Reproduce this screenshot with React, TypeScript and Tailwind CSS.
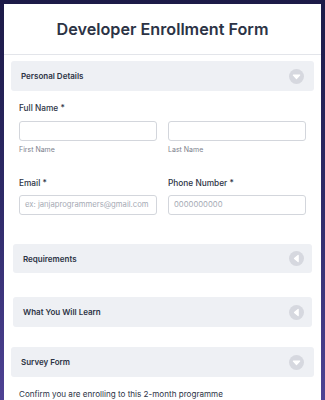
import React from "react";

function CircleIcon({ dir }: { dir: "down" | "left" }) {
  return (
    <svg width="15" height="15" viewBox="0 0 16 16" className="shrink-0">
      <circle cx="8" cy="8" r="8" fill="#d6d8df" />
      {dir === "down" ? (
        <path d="M4.6 6.4 L8 10.2 L11.4 6.4 Z" fill="#ffffff" stroke="#ffffff" strokeWidth="1.2" strokeLinejoin="round" />
      ) : (
        <path d="M9.8 4.6 L5.8 8 L9.8 11.4 Z" fill="#ffffff" stroke="#ffffff" strokeWidth="1.2" strokeLinejoin="round" />
      )}
    </svg>
  );
}

function SectionBar({ title, open, tall }: { title: string; open: boolean; tall?: boolean }) {
  return (
    <div
      className={
        open
          ? "flex h-[30px] items-center justify-between rounded-[3px] bg-[#eef0f4] pl-[10px] pr-[10px]"
          : tall
            ? "mx-[2px] flex h-[30px] items-center justify-between rounded-[3px] bg-[#eef0f4] pl-[10px] pr-[8px]"
            : "mx-[2px] flex h-[29px] items-center justify-between rounded-[3px] bg-[#eef0f4] pl-[10px] pr-[8px]"
      }
    >
      <span className="text-[8px] font-semibold leading-[12px] text-[#2c3345]">{title}</span>
      <CircleIcon dir={open ? "down" : "left"} />
    </div>
  );
}

function Field({ placeholder }: { placeholder?: string }) {
  return (
    <div className="flex h-[20px] items-center overflow-hidden whitespace-nowrap rounded-[3px] border border-[#d3d6dc] bg-white px-[5px] text-[7.7px] text-[#a6abb5]">
      {placeholder}
    </div>
  );
}

export default function App() {
  return (
    <div
      className="h-[400px] w-[325px] overflow-hidden bg-gradient-to-b from-[#1c1a47] via-[#2e2a68] to-[#4e4294] p-[4px] pb-0"
      style={{ fontFamily: "Inter, 'Noto Sans', sans-serif" }}
    >
      <div className="h-full bg-white">
        <div className="flex h-[51px] items-center justify-center border-b border-[#e3e5ea]">
          <h1 className="text-[16.2px] font-semibold text-[#2c3345]">Developer Enrollment Form</h1>
        </div>

        <div className="px-[7px] pt-[6px]">
          <SectionBar title="Personal Details" open />

          <div className="px-[8px] pt-[11px]">
            <div className="text-[8.3px] font-medium leading-[12px] text-[#2c3345]">Full Name *</div>
            <div className="mt-[7px] grid grid-cols-2 gap-[11px]">
              <div>
                <Field />
                <div className="mt-[4px] text-[7px] leading-[10px] text-[#7c818d]">First Name</div>
              </div>
              <div>
                <Field />
                <div className="mt-[4px] text-[7px] leading-[10px] text-[#7c818d]">Last Name</div>
              </div>
            </div>

            <div className="mt-[22px] grid grid-cols-2 gap-[11px]">
              <div>
                <div className="text-[8.3px] font-medium leading-[12px] text-[#2c3345]">Email *</div>
                <div className="mt-[6px]">
                  <Field placeholder="ex: janjaprogrammers@gmail.com" />
                </div>
              </div>
              <div>
                <div className="text-[8.3px] font-medium leading-[12px] text-[#2c3345]">Phone Number *</div>
                <div className="mt-[6px]">
                  <Field placeholder="0000000000" />
                </div>
              </div>
            </div>
          </div>

          <div className="mt-[29px]">
            <SectionBar title="Requirements" open={false} />
          </div>
          <div className="mt-[24px]">
            <SectionBar title="What You Will Learn" open={false} tall />
          </div>
          <div className="mt-[20px]">
            <SectionBar title="Survey Form" open />
          </div>

          <div className="px-[8px] pt-[11px] text-[8.1px] leading-[12px] text-[#2c3345]">
            Confirm you are enrolling to this 2-month programme
          </div>
        </div>
      </div>
    </div>
  );
}
